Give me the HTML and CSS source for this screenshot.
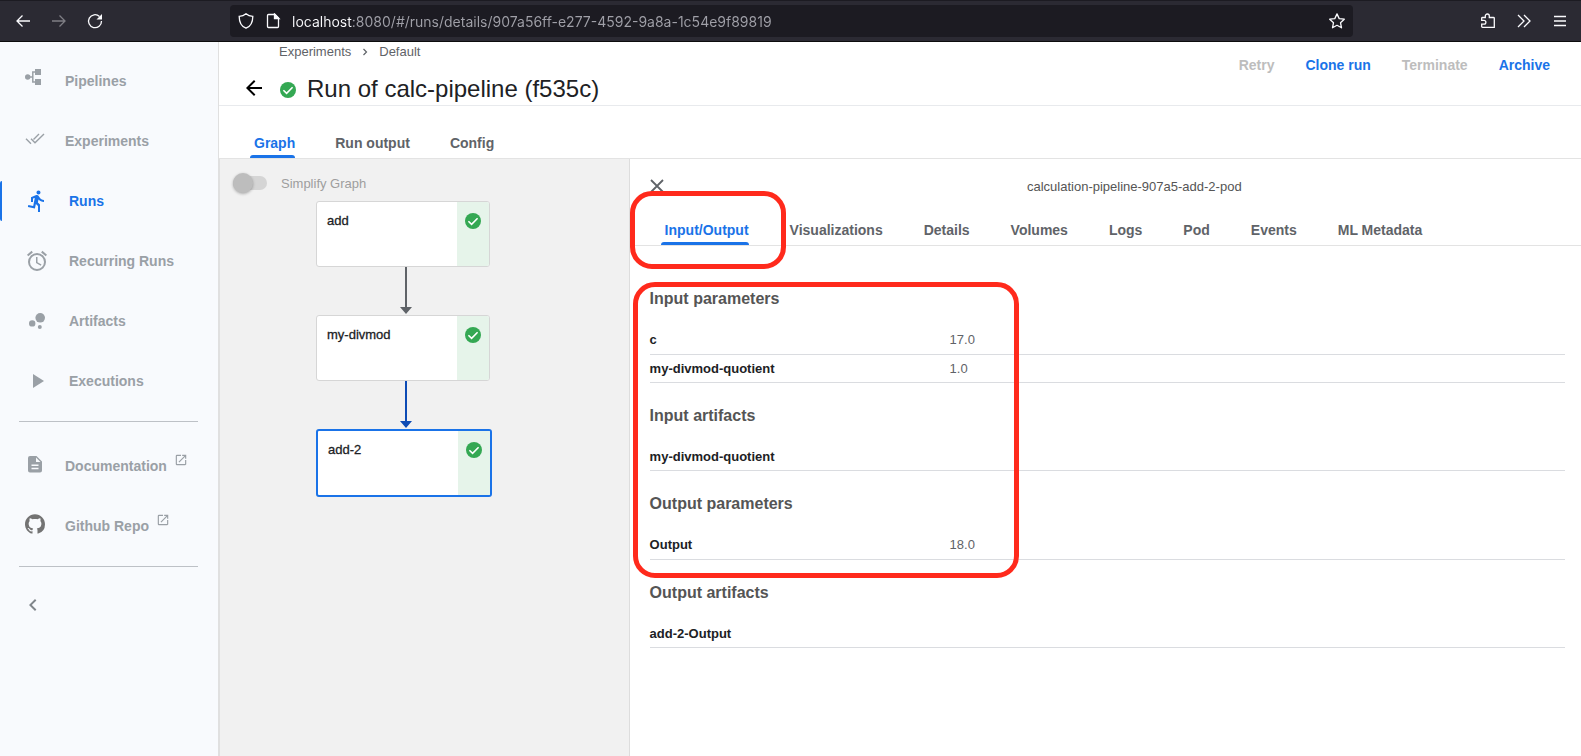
FILE: index.html
```html
<!DOCTYPE html>
<html lang="en">
<head>
    <meta charset="UTF-8">
    <meta name="viewport" content="width=device-width, initial-scale=1.0">
    <title>Run of calc-pipeline (f535c)</title>
    <link rel="stylesheet" href="styles.css">
</head>
<body>
    <svg class="defs" width="0" height="0" aria-hidden="true">
        <symbol id="check" viewBox="0 0 16 16">
            <circle cx="8" cy="8" r="8" fill="#34a853"/>
            <path d="M3.4 8.2l3.2 3.2 6-6.2" fill="none" stroke="#fff" stroke-width="1.6"/>
        </symbol>
        <symbol id="external" viewBox="0 0 24 24">
            <path fill="#9aa0a6" d="M19 19H5V5h7V3H5a2 2 0 0 0-2 2v14a2 2 0 0 0 2 2h14c1.100 0 2-.9 2-2v-7h-2v7zM14 3v2h3.590l-9.830 9.830 1.410 1.410L19 6.410V10h2V3h-7z"/>
        </symbol>
    </svg>

    <!-- Browser toolbar -->
    <div class="toolbar">
        <div class="toolbar-nav">
            <button aria-label="Back"><svg width="16" height="16" viewBox="0 0 16 16"><path d="M15 8H2M7.500 2.500L2 8l5.500 5.500"/></svg></button>
            <button aria-label="Forward" disabled><svg width="16" height="16" viewBox="0 0 16 16"><path d="M1 8h13M8.500 2.500L14 8l-5.500 5.500"/></svg></button>
            <button aria-label="Reload"><svg width="16" height="16" viewBox="0 0 16 16"><path d="M12.500 3.500A6.500 6.500 0 1 0 14.500 8"/><path d="M15 1v5.500H9.500z" fill="#fbfbfe" stroke="none"/></svg></button>
        </div>
        <div class="address">
            <svg width="16" height="16" viewBox="0 0 16 16"><path d="M8 .8c2 1.700 4.300 2.400 6.800 2.600 0 5.400-1.800 9.800-6.800 11.800C3 13.200 1.200 8.800 1.200 3.400 3.700 3.200 6 2.500 8 .8z"/></svg>
            <svg width="16" height="16" viewBox="0 0 16 16"><path d="M3.500 1.500H10L13.500 5v8.500a1 1 0 0 1-1 1h-9a1 1 0 0 1-1-1v-11a1 1 0 0 1 1-1z"/><path d="M9.500 1v4.500H14z" fill="#fbfbfe"/></svg>
            <input type="text" class="url" aria-label="Address" value="localhost:8080/#/runs/details/907a56ff-e277-4592-9a8a-1c54e9f89819">
            <button aria-label="Bookmark this page"><svg width="16" height="16" viewBox="0 0 16 16"><path d="M8 .9l2.200 4.700 5.100.6-3.800 3.500 1 5.100L8 12.300l-4.500 2.500 1-5.100L.7 6.200l5.100-.6z" stroke-linejoin="round"/></svg></button>
        </div>
        <div class="toolbar-menu">
            <button aria-label="Extensions"><svg width="16" height="16" viewBox="0 0 16 16"><path d="M5.300 4.500V3a2 2 0 0 1 4 0v1.500h4.200a.8.8 0 0 1 .8.8v9H2.500a.8.8 0 0 1-.8-.8v-2.300H4a1.900 1.900 0 0 0 0-3.800H1.700V5.300a.8.8 0 0 1 .8-.8z"/></svg></button>
            <button aria-label="More tools"><svg width="16" height="16" viewBox="0 0 16 16"><path d="M2 2l6 6-6 6M8 2l6 6-6 6"/></svg></button>
            <button aria-label="Open menu"><svg width="16" height="16" viewBox="0 0 16 16"><path d="M2 3.500h12M2 8h12M2 12.500h12"/></svg></button>
        </div>
    </div>

    <div class="app">
        <nav class="sidebar">
            <a href="#/pipelines" class="nav-link">
                <svg width="20" height="24" viewBox="0 0 20 24"><circle cx="2.700" cy="8" r="2.700"/><rect x="10" y="0" width="6" height="6"/><rect x="10" y="10" width="6" height="6"/><path d="M3 8h4.500M11 3H7.800v10H11" fill="none" stroke="#9aa0a6" stroke-width="1.500"/></svg>
                Pipelines
            </a>
            <a href="#/experiments" class="nav-link">
                <svg width="20" height="24" viewBox="0 0 20 24"><path d="M1 9.700l5 5M6 9.700l4 4L19 5M14 5L8.500 10.500" fill="none" stroke="#9aa0a6" stroke-width="1.400"/></svg>
                Experiments
            </a>
            <a href="#/runs" class="nav-link active">
                <svg width="24" height="24" viewBox="0 0 24 24"><path d="M13.490 5.480c1.100 0 2-.9 2-2s-.9-2-2-2-2 .9-2 2 .9 2 2 2zm-3.600 13.900l1-4.400 2.100 2v6h2v-7.500l-2.100-2 .6-3c1.300 1.500 3.300 2.500 5.500 2.500v-2c-1.900 0-3.500-1-4.300-2.400l-1-1.600c-.4-.6-1-1-1.700-1-.3 0-.5.1-.8.1l-5.200 2.200v4.700h2v-3.400l1.800-.7-1.600 8.100-4.900-1-.4 2 7 1.400z"/></svg>
                Runs
            </a>
            <a href="#/recurringruns" class="nav-link">
                <svg width="24" height="24" viewBox="0 0 24 24"><path d="M22 5.720l-4.600-3.860-1.290 1.530 4.600 3.860L22 5.720zM7.880 3.390L6.600 1.860 2 5.710l1.290 1.530 4.590-3.850zM12.500 8H11v6l4.750 2.850.75-1.230-4-2.370V8zM12 4a9 9 0 1 0 .01 18A9 9 0 0 0 12 4zm0 16a7 7 0 1 1 0-14 7 7 0 0 1 0 14z"/></svg>
                Recurring Runs
            </a>
            <a href="#/artifacts" class="nav-link">
                <svg width="24" height="24" viewBox="0 0 24 24"><circle cx="7.200" cy="14.400" r="3.200"/><circle cx="14.800" cy="18" r="2"/><circle cx="15.200" cy="8.800" r="4.800"/></svg>
                Artifacts
            </a>
            <a href="#/executions" class="nav-link">
                <svg width="24" height="24" viewBox="0 0 24 24"><path d="M8 5v14l11-7z"/></svg>
                Executions
            </a>
            <hr>
            <a href="https://www.kubeflow.org/docs/pipelines/" class="nav-link">
                <svg width="20" height="24" viewBox="0 0 20 24"><path fill-rule="evenodd" d="M11.500 2H5a2 2 0 0 0-2 2v12.500a2 2 0 0 0 2 2h10a2 2 0 0 0 2-2V7.500zM6.500 15.200v-1.500h7v1.500zM6.500 11.900v-1.500h7v1.500zM11 8V3.500L15.500 8z"/></svg>
                <span>Documentation</span>
                <svg class="external" width="14" height="14"><use href="#external"/></svg>
            </a>
            <a href="https://github.com/kubeflow/pipelines" class="nav-link">
                <svg class="github" width="20" height="24" viewBox="0 0 16 19"><path d="M8 0C3.580 0 0 3.580 0 8c0 3.540 2.290 6.530 5.470 7.590.4.070.55-.17.55-.38 0-.19-.01-.82-.01-1.490-2.010.37-2.530-.49-2.690-.94-.09-.23-.48-.94-.82-1.130-.28-.15-.68-.52-.01-.53.63-.01 1.080.58 1.230.82.72 1.210 1.870.87 2.330.66.07-.52.28-.87.51-1.070-1.780-.2-3.640-.89-3.640-3.950 0-.87.31-1.590.82-2.150-.08-.2-.36-1.020.08-2.120 0 0 .67-.21 2.200.82.64-.18 1.320-.27 2-.27s1.360.09 2 .27c1.530-1.040 2.200-.82 2.200-.82.44 1.100.16 1.920.08 2.120.51.56.82 1.270.82 2.150 0 3.070-1.870 3.750-3.650 3.950.29.25.54.73.54 1.480 0 1.070-.01 1.930-.01 2.200 0 .21.15.46.55.38A8.010 8.010 0 0 0 16 8c0-4.420-3.580-8-8-8z"/></svg>
                <span>Github Repo</span>
                <svg class="external" width="14" height="14"><use href="#external"/></svg>
            </a>
            <hr>
            <button class="collapse" aria-label="Collapse menu"><svg width="24" height="24" viewBox="0 0 24 24"><path d="M15.400 7.400L14 6l-6 6 6 6 1.400-1.400L10.800 12z"/></svg></button>
        </nav>

        <main class="page">
            <header class="page-header">
                <div>
                    <div class="breadcrumbs">
                        <a href="#/experiments">Experiments</a>
                        <svg width="6" height="8" viewBox="0 0 6 8"><path d="M1.500 1l3 3-3 3" fill="none" stroke="#5f6368" stroke-width="1.200"/></svg>
                        <a href="#/experiments/details">Default</a>
                    </div>
                    <div class="title">
                        <button aria-label="Back to runs"><svg width="24" height="24" viewBox="0 0 24 24"><path d="M20 11H7.830l5.590-5.590L12 4l-8 8 8 8 1.410-1.410L7.830 13H20v-2z"/></svg></button>
                        <svg class="title-status" width="16" height="16"><use href="#check"/></svg>
                        <h1>Run of calc-pipeline (f535c)</h1>
                    </div>
                </div>
                <div class="actions">
                    <button disabled>Retry</button>
                    <button>Clone run</button>
                    <button disabled>Terminate</button>
                    <button>Archive</button>
                </div>
            </header>

            <div class="tabs page-tabs">
                <button class="tab selected">Graph</button>
                <button class="tab">Run output</button>
                <button class="tab">Config</button>
            </div>

            <div class="content">
                <section class="graph">
                    <label class="simplify">
                        <input type="checkbox" class="switch">
                        Simplify Graph
                    </label>
                    <div class="nodes">
                        <div class="node">
                            <span class="node-name">add</span>
                            <span class="node-status"><svg width="16" height="16"><use href="#check"/></svg></span>
                        </div>
                        <svg class="edge" width="12" height="48" viewBox="0 0 12 48"><path d="M5 0h2v40h5l-6 7-6-7h5z"/></svg>
                        <div class="node">
                            <span class="node-name">my-divmod</span>
                            <span class="node-status"><svg width="16" height="16"><use href="#check"/></svg></span>
                        </div>
                        <svg class="edge edge-selected" width="12" height="48" viewBox="0 0 12 48"><path d="M5 0h2v40h5l-6 7-6-7h5z"/></svg>
                        <div class="node node-selected">
                            <span class="node-name">add-2</span>
                            <span class="node-status"><svg width="16" height="16"><use href="#check"/></svg></span>
                        </div>
                    </div>
                </section>

                <section class="side-panel">
                    <div class="panel-header">
                        <button aria-label="Close"><svg width="14" height="14" viewBox="0 0 14 14"><path d="M1 1l12 12M13 1L1 13" stroke="#5f6368" stroke-width="1.800"/></svg></button>
                        <div class="panel-title">calculation-pipeline-907a5-add-2-pod</div>
                    </div>
                    <div class="tabs panel-tabs">
                        <button class="tab selected">Input/Output</button>
                        <button class="tab">Visualizations</button>
                        <button class="tab">Details</button>
                        <button class="tab">Volumes</button>
                        <button class="tab">Logs</button>
                        <button class="tab">Pod</button>
                        <button class="tab">Events</button>
                        <button class="tab">ML Metadata</button>
                    </div>
                    <div class="details">
                        <h2>Input parameters</h2>
                        <table>
                            <tr><th scope="row">c</th><td>17.0</td></tr>
                            <tr><th scope="row">my-divmod-quotient</th><td>1.0</td></tr>
                        </table>
                        <h2>Input artifacts</h2>
                        <table>
                            <tr><th scope="row">my-divmod-quotient</th><td></td></tr>
                        </table>
                        <h2>Output parameters</h2>
                        <table>
                            <tr><th scope="row">Output</th><td>18.0</td></tr>
                        </table>
                        <h2>Output artifacts</h2>
                        <table>
                            <tr><th scope="row">add-2-Output</th><td></td></tr>
                        </table>
                    </div>
                    <div class="highlight highlight-tab"></div>
                    <div class="highlight highlight-params"></div>
                </section>
            </div>
        </main>
    </div>
</body>
</html>
```
FILE: styles.css
```css
* {
    box-sizing: border-box;
}
body {
    margin: 0;
    min-height: 100vh;
    display: flex;
    flex-direction: column;
    font-family: "Liberation Sans", Arial, sans-serif;
    font-size: 13px;
    color: #202124;
    background: #fff;
}
button {
    padding: 0;
    border: none;
    background: none;
    font: inherit;
    color: inherit;
    cursor: pointer;
}
svg {
    display: block;
    flex: none;
}
a {
    color: inherit;
    text-decoration: none;
}
.defs { position: absolute; }

/* browser toolbar */
.toolbar {
    display: flex;
    align-items: center;
    height: 42px;
    background: #2b2a33;
    border-top: 1px solid #1c1b22;
    border-bottom: 1px solid #0c0c0d;
}
.toolbar svg {
    fill: none;
    stroke: #fbfbfe;
    stroke-width: 1.3;
}
.toolbar-nav {
    display: flex;
    gap: 20px;
    width: 230px;
    padding-left: 15px;
}
.toolbar-nav button:disabled { opacity: 0.4; }
.address {
    flex: 1;
    display: flex;
    align-items: center;
    gap: 11px;
    height: 32px;
    padding: 0 8px;
    border-radius: 4px;
    background: #1c1b22;
}
/* host is white, the rest of the address is dimmed */
.url {
    flex: 1;
    padding: 0;
    border: none;
    outline: none;
    font: 14px Inter, sans-serif;
    color: transparent;
    background: linear-gradient(to right, #fbfbfe 61px, #a0a0a8 61px);
    -webkit-background-clip: text;
    background-clip: text;
}
.toolbar-menu {
    display: flex;
    gap: 20px;
    width: 228px;
    padding-right: 13px;
    justify-content: flex-end;
}

/* sidebar */
.app {
    flex: 1;
    display: flex;
}
.sidebar {
    flex: none;
    width: 219px;
    padding-top: 9px;
    background: #f8fafd;
    border-right: 1px solid #e0e0e0;
}
.nav-link {
    display: flex;
    align-items: center;
    gap: 20px;
    height: 40px;
    margin: 10px 0 20px;
    padding-left: 25px;
    font-size: 14px;
    font-weight: bold;
    color: #9aa0a6;
    fill: #9aa0a6;
}
.nav-link.active {
    padding-left: 23px;
    border-left: 2px solid #1a73e8;
    border-radius: 2px;
    color: #1a73e8;
    fill: #1a73e8;
}
.github { fill: #737373; }
.external {
    margin: 0 0 12px -13px;
}
.sidebar hr {
    height: 1px;
    margin: 19px 20px 24px 19px;
    border: none;
    background: #bdc1c6;
}
.collapse {
    margin: 2px 0 0 21px;
    fill: #80868b;
}

/* page header */
.page {
    flex: 1;
    min-width: 0;
    display: flex;
    flex-direction: column;
}
.page-header {
    display: flex;
    justify-content: space-between;
    height: 64px;
    border-bottom: 1px solid #e8eaed;
}
.breadcrumbs {
    display: flex;
    align-items: center;
    gap: 11px;
    height: 19px;
    padding-left: 60px;
    color: #5f6368;
}
.title {
    display: flex;
    align-items: center;
    height: 36px;
    margin-top: 9px;
    padding-left: 23px;
}
.title-status {
    margin: 4px 11px 0 14px;
}
.title h1 {
    margin: 2px 0 0;
    font-size: 24px;
    font-weight: normal;
}
.actions {
    display: flex;
    align-items: center;
    gap: 31px;
    height: 46px;
    padding-right: 31px;
    font-size: 14px;
    font-weight: bold;
    color: #1a73e8;
}
.actions button:disabled { color: #bdbdbd; }

/* tabs */
.tabs {
    display: flex;
    align-items: flex-end;
    gap: 40px;
    border-bottom: 1px solid #e3e3e3;
}
.tab {
    height: 27px;
    padding: 0;
    border-bottom: 3px solid transparent;
    font-size: 14px;
    font-weight: bold;
    color: #5f6368;
}
.tab.selected {
    position: relative;
    color: #1a73e8;
}
.tab.selected::after {
    content: "";
    position: absolute;
    left: -4px;
    right: 0;
    bottom: -3px;
    height: 3px;
    border-radius: 3px 3px 0 0;
    background: #1a73e8;
}
.page-tabs {
    height: 53px;
    padding-left: 35px;
}

/* graph */
.content {
    flex: 1;
    display: flex;
}
.graph {
    flex: none;
    width: calc(30% + 1px);
    background: #f1f1f1;
    border-left: 1px solid #e0e0e0;
}
.simplify {
    display: flex;
    align-items: center;
    gap: 14px;
    height: 42px;
    margin-top: 3px;
    margin-bottom: -3px;
    padding-left: 13px;
    color: #9e9e9e;
}
.switch {
    appearance: none;
    display: flex;
    align-items: center;
    width: 34px;
    height: 14px;
    margin: 0;
    border-radius: 7px;
    background: #d5d5d5;
}
.switch::before {
    content: "";
    width: 20px;
    height: 20px;
    border-radius: 50%;
    background: #bdbdbd;
    box-shadow: 0 1px 3px rgba(0,0,0,0.3);
}
.nodes {
    display: flex;
    flex-direction: column;
    align-items: flex-start;
    padding-left: 96px;
}
.node {
    display: flex;
    width: 174px;
    height: 66px;
    border: 1px solid #d6d6d6;
    border-radius: 3px;
    background: #fff;
    overflow: hidden;
}
.node-selected {
    width: 176px;
    height: 68px;
    border: 2px solid #1a73e8;
}
.node-name {
    flex: 1;
    padding: 11px 10px;
    -webkit-text-stroke: 0.3px #202124;
}
.node-status {
    width: 32px;
    padding: 11px 8px;
    background: #e6f4ea;
}
.edge {
    margin-left: 84px;
    fill: #5f6368;
}
.edge-selected { fill: #0d4bb5; }

/* side panel */
.side-panel {
    position: relative;
    flex: 1;
    min-width: 0;
    border-left: 1px solid #ddd;
}
.panel-header {
    display: flex;
    align-items: center;
    gap: 44px;
    height: 54px;
    padding: 0 20px;
}
.panel-title {
    flex: 1;
    text-align: center;
    color: #555;
}
.panel-tabs {
    gap: 41px;
    height: 33px;
    padding-left: 35px;
}
.details {
    padding: 20px 16px 0 20px;
}
.details h2 {
    margin: 23px 0 17px;
    font-size: 16px;
    line-height: 20px;
    color: #555;
}
.details table {
    width: 100%;
    border-collapse: collapse;
}
.details th,
.details td {
    height: 28px;
    padding: 0;
    border-bottom: 1px solid #dadce0;
    text-align: left;
}
.details th { width: 300px; }
.details td { color: #5f6368; }

/* red callouts drawn over the panel */
.highlight {
    position: absolute;
    border: 5px solid #ff2a1c;
    border-radius: 22px;
    pointer-events: none;
}
.highlight-tab {
    left: 0;
    top: 32px;
    width: 156px;
    height: 78px;
}
.highlight-params {
    left: 3px;
    top: 123px;
    width: 386px;
    height: 296px;
}
```
